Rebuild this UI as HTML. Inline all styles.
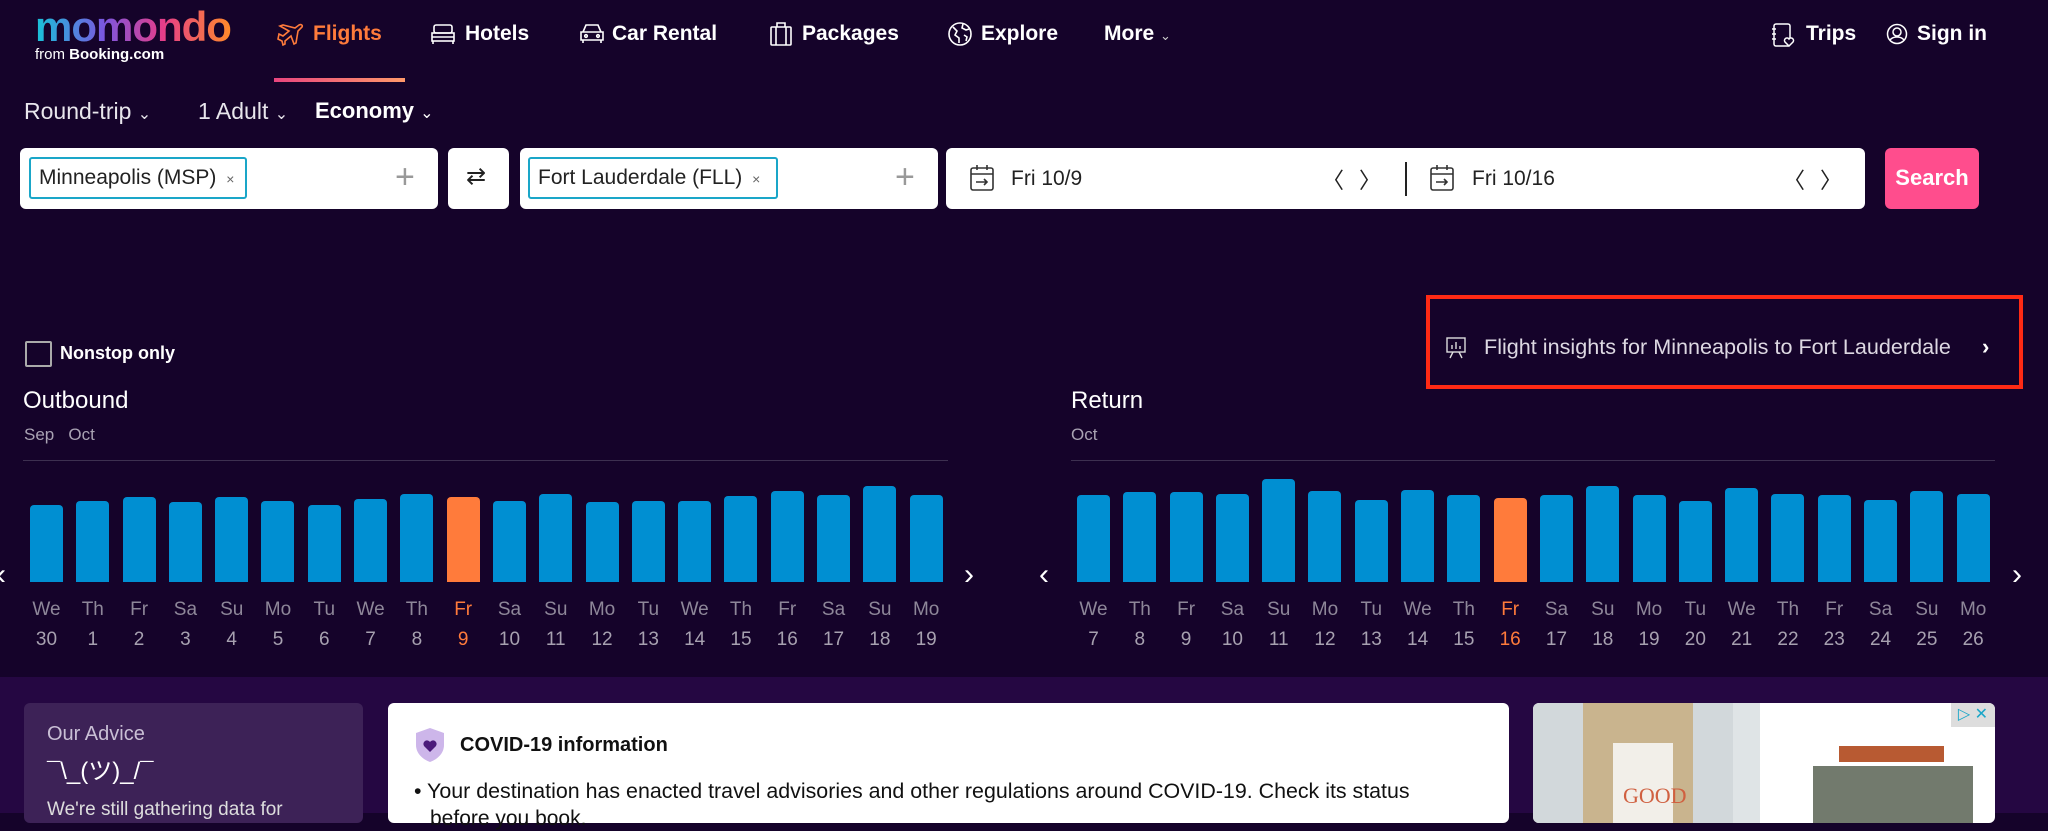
<!DOCTYPE html>
<html><head><meta charset="utf-8"><style>
*{margin:0;padding:0;box-sizing:border-box}
body{width:2048px;height:813px;overflow:hidden;background:#15032a;font-family:"Liberation Sans",sans-serif;color:#fff;position:relative}
.a{position:absolute;white-space:nowrap}
.nav{font-size:21px;font-weight:bold;top:22px}
.box{position:absolute;background:#fff;border-radius:6px;top:148px;height:61px}
.chip{position:absolute;top:9px;height:42px;border:2px solid #1aa6c8;border-radius:3px;color:#222;font-size:21px;line-height:38px;padding-left:8px}
.chart{position:absolute;top:470px;display:flex}
.col{width:46.3px;position:relative;height:180px}
.col i{position:absolute;left:0;width:33px;bottom:68px;background:#008fd2;border-radius:4px 4px 0 0}
.col b,.col u{position:absolute;left:0;width:33px;text-align:center;font-weight:normal;text-decoration:none;color:#8e8799;font-size:19px}
.col b{top:129px}.col u{top:159px;color:#a7a1b0}
.col.o i{background:#ff7b3b}.col.o b,.col.o u{color:#ff7b3b}
.g{color:#a9a3b3}
</style></head><body>
<!-- logo -->
<div class="a" style="left:35px;top:3px;font-size:42px;font-weight:bold;letter-spacing:-1px;background:linear-gradient(90deg,#17c3d8,#7a57e0 35%,#e43d8a 65%,#ff8a2a);-webkit-background-clip:text;color:transparent">momondo</div>
<div class="a" style="left:35px;top:46px;font-size:15px">from <b>Booking.com</b></div>
<!-- nav -->
<svg class="a" style="left:276px;top:22px" width="28" height="24" viewBox="0 0 28 24" fill="none" stroke="#ff7b3b" stroke-width="1.6"><path d="M3 12l4 2 6-5-9-5 3-1 12 3 4-3c2-1 4 0 3 2l-4 4-2 12-2 1-3-8-6 5v3l-2 1-1-4-4-2z"/></svg>
<div class="a nav" style="left:313px;color:#ff7b3b">Flights</div>
<div class="a" style="left:274px;top:78px;width:131px;height:4px;background:linear-gradient(90deg,#e8457e,#ff9a6a)"></div>
<svg class="a" style="left:430px;top:22px" width="26" height="24" fill="none" stroke="#fff" stroke-width="1.6"><rect x="4" y="3" width="18" height="8" rx="2"/><rect x="2" y="11" width="22" height="8"/><path d="M2 15h22M3 19v3M23 19v3"/></svg>
<div class="a nav" style="left:465px">Hotels</div>
<svg class="a" style="left:578px;top:22px" width="28" height="24" fill="none" stroke="#fff" stroke-width="1.6"><path d="M5 10l3-7h12l3 7M3 10h22v8H3zM5 18v3M23 18v3"/><circle cx="8" cy="14" r="1.3"/><circle cx="20" cy="14" r="1.3"/></svg>
<div class="a nav" style="left:612px">Car Rental</div>
<svg class="a" style="left:769px;top:21px" width="24" height="26" fill="none" stroke="#fff" stroke-width="1.6"><rect x="2" y="6" width="20" height="18" rx="1"/><path d="M8 6V2h8v4M7 6v18M17 6v18"/></svg>
<div class="a nav" style="left:802px">Packages</div>
<svg class="a" style="left:947px;top:21px" width="26" height="26" fill="none" stroke="#fff" stroke-width="1.6"><circle cx="13" cy="13" r="11"/><path d="M6 6l4 4-2 4 4 3v5M16 3l-1 4 4 2 3-1M17 14l3 2-1 4"/></svg>
<div class="a nav" style="left:981px">Explore</div>
<div class="a nav" style="left:1104px">More <span style="font-size:13px;color:#ccc;font-weight:normal">&#8964;</span></div>
<svg class="a" style="left:1771px;top:22px" width="26" height="26" fill="none" stroke="#fff" stroke-width="1.5"><rect x="3" y="2" width="16" height="22" rx="2"/><path d="M1 7h4M1 12h4M1 17h4M18 24l-4-4a2.5 2.5 0 014-3 2.5 2.5 0 014 3z" fill="#15032a"/></svg>
<div class="a nav" style="left:1806px">Trips</div>
<svg class="a" style="left:1886px;top:23px" width="22" height="22" fill="none" stroke="#fff" stroke-width="1.5"><circle cx="11" cy="11" r="9.5"/><circle cx="11" cy="9" r="4"/><path d="M4 17c3-4 11-4 14 0"/></svg>
<div class="a nav" style="left:1917px">Sign in</div>
<!-- trip options -->
<div class="a" style="left:24px;top:98px;font-size:23px;color:#e8e6ec">Round-trip <span style="font-size:16px">&#8964;</span></div>
<div class="a" style="left:198px;top:98px;font-size:23px;color:#e8e6ec">1 Adult <span style="font-size:16px">&#8964;</span></div>
<div class="a" style="left:315px;top:98px;font-size:22px;font-weight:bold">Economy <span style="font-size:16px;font-weight:normal">&#8964;</span></div>
<!-- search -->
<div class="box" style="left:20px;width:418px"><div class="chip" style="left:9px;width:218px">Minneapolis (MSP) <span style="font-size:14px;color:#666;margin-left:4px">×</span></div><div class="a" style="left:375px;top:10px;font-size:34px;color:#999;font-weight:lighter">+</div></div>
<div class="box" style="left:448px;width:61px"><div class="a" style="left:18px;top:14px;font-size:24px;color:#222">&#8644;</div></div>
<div class="box" style="left:520px;width:418px"><div class="chip" style="left:8px;width:250px">Fort Lauderdale (FLL) <span style="font-size:14px;color:#666;margin-left:4px">×</span></div><div class="a" style="left:375px;top:10px;font-size:34px;color:#999">+</div></div>
<div class="box" style="left:946px;width:919px;color:#222">
<svg class="a" style="left:23px;top:15px" width="28" height="30" fill="none" stroke="#333" stroke-width="1.6"><rect x="2" y="5" width="22" height="22" rx="2"/><path d="M2 11h22M8 2v5M18 2v5M7 19h11m-3-3l3 3-3 3"/></svg>
<div class="a" style="left:65px;top:19px;font-size:21px">Fri 10/9</div>
<div class="a" style="left:376px;top:15px;font-size:22px">&#12296;</div><div class="a" style="left:413px;top:15px;font-size:22px">&#12297;</div>
<div class="a" style="left:459px;top:14px;width:2px;height:34px;background:#222"></div>
<svg class="a" style="left:483px;top:15px" width="28" height="30" fill="none" stroke="#333" stroke-width="1.6"><rect x="2" y="5" width="22" height="22" rx="2"/><path d="M2 11h22M8 2v5M18 2v5M7 19h11m-3-3l3 3-3 3"/></svg>
<div class="a" style="left:526px;top:19px;font-size:21px">Fri 10/16</div>
<div class="a" style="left:837px;top:15px;font-size:22px">&#12296;</div><div class="a" style="left:874px;top:15px;font-size:22px">&#12297;</div>
</div>
<div class="box" style="left:1885px;width:94px;background:#ff4d8d"><div class="a" style="left:0;width:94px;text-align:center;top:17px;font-size:22px;font-weight:bold">Search</div></div>
<!-- nonstop -->
<div class="a" style="left:25px;top:341px;width:27px;height:26px;border:2px solid #aaa;border-radius:2px"></div>
<div class="a" style="left:60px;top:343px;font-size:18px;font-weight:bold">Nonstop only</div>
<!-- insights -->
<div class="a" style="left:1426px;top:295px;width:597px;height:94px;border:4px solid #ff2a14"></div>
<svg class="a" style="left:1445px;top:336px" width="22" height="24" fill="none" stroke="#ddd" stroke-width="1.4"><rect x="2" y="2" width="18" height="14"/><path d="M7 13V9M11 13V6M15 13V10M8 16l-3 6M14 16l3 6"/></svg>
<div class="a" style="left:1484px;top:334px;font-size:21.6px;color:#ddd8e2">Flight insights for Minneapolis to Fort Lauderdale</div>
<div class="a" style="left:1982px;top:334px;font-size:22px;font-weight:bold">›</div>
<!-- headings -->
<div class="a" style="left:23px;top:387px;font-size:24px">Outbound</div>
<div class="a g" style="left:24px;top:425px;font-size:17px">Sep&nbsp;&nbsp;&nbsp;Oct</div>
<div class="a" style="left:23px;top:460px;width:925px;height:1px;background:#3d3050"></div>
<div class="a" style="left:1071px;top:387px;font-size:24px">Return</div>
<div class="a g" style="left:1071px;top:425px;font-size:17px">Oct</div>
<div class="a" style="left:1071px;top:460px;width:924px;height:1px;background:#3d3050"></div>
<div class="a" style="left:-4px;top:558px;font-size:30px">‹</div>
<div class="a" style="left:964px;top:558px;font-size:30px">›</div>
<div class="a" style="left:1039px;top:558px;font-size:30px">‹</div>
<div class="a" style="left:2012px;top:558px;font-size:30px">›</div>
<div class="chart" style="left:30px">
<div class="col"><i style="height:77px"></i><b>We</b><u>30</u></div>
<div class="col"><i style="height:81px"></i><b>Th</b><u>1</u></div>
<div class="col"><i style="height:85px"></i><b>Fr</b><u>2</u></div>
<div class="col"><i style="height:80px"></i><b>Sa</b><u>3</u></div>
<div class="col"><i style="height:85px"></i><b>Su</b><u>4</u></div>
<div class="col"><i style="height:81px"></i><b>Mo</b><u>5</u></div>
<div class="col"><i style="height:77px"></i><b>Tu</b><u>6</u></div>
<div class="col"><i style="height:83px"></i><b>We</b><u>7</u></div>
<div class="col"><i style="height:88px"></i><b>Th</b><u>8</u></div>
<div class="col o"><i style="height:85px"></i><b>Fr</b><u>9</u></div>
<div class="col"><i style="height:81px"></i><b>Sa</b><u>10</u></div>
<div class="col"><i style="height:88px"></i><b>Su</b><u>11</u></div>
<div class="col"><i style="height:80px"></i><b>Mo</b><u>12</u></div>
<div class="col"><i style="height:81px"></i><b>Tu</b><u>13</u></div>
<div class="col"><i style="height:81px"></i><b>We</b><u>14</u></div>
<div class="col"><i style="height:86px"></i><b>Th</b><u>15</u></div>
<div class="col"><i style="height:91px"></i><b>Fr</b><u>16</u></div>
<div class="col"><i style="height:87px"></i><b>Sa</b><u>17</u></div>
<div class="col"><i style="height:96px"></i><b>Su</b><u>18</u></div>
<div class="col"><i style="height:87px"></i><b>Mo</b><u>19</u></div>
</div>
<div class="chart" style="left:1077px">
<div class="col"><i style="height:87px"></i><b>We</b><u>7</u></div>
<div class="col"><i style="height:90px"></i><b>Th</b><u>8</u></div>
<div class="col"><i style="height:90px"></i><b>Fr</b><u>9</u></div>
<div class="col"><i style="height:88px"></i><b>Sa</b><u>10</u></div>
<div class="col"><i style="height:103px"></i><b>Su</b><u>11</u></div>
<div class="col"><i style="height:91px"></i><b>Mo</b><u>12</u></div>
<div class="col"><i style="height:82px"></i><b>Tu</b><u>13</u></div>
<div class="col"><i style="height:92px"></i><b>We</b><u>14</u></div>
<div class="col"><i style="height:87px"></i><b>Th</b><u>15</u></div>
<div class="col o"><i style="height:84px"></i><b>Fr</b><u>16</u></div>
<div class="col"><i style="height:87px"></i><b>Sa</b><u>17</u></div>
<div class="col"><i style="height:96px"></i><b>Su</b><u>18</u></div>
<div class="col"><i style="height:87px"></i><b>Mo</b><u>19</u></div>
<div class="col"><i style="height:81px"></i><b>Tu</b><u>20</u></div>
<div class="col"><i style="height:94px"></i><b>We</b><u>21</u></div>
<div class="col"><i style="height:88px"></i><b>Th</b><u>22</u></div>
<div class="col"><i style="height:87px"></i><b>Fr</b><u>23</u></div>
<div class="col"><i style="height:82px"></i><b>Sa</b><u>24</u></div>
<div class="col"><i style="height:91px"></i><b>Su</b><u>25</u></div>
<div class="col"><i style="height:88px"></i><b>Mo</b><u>26</u></div>
</div>
<!-- bottom -->
<div class="a" style="left:0;top:677px;width:2048px;height:136px;background:#250742"></div>
<div class="a" style="left:24px;top:703px;width:339px;height:120px;background:#3d2257;border-radius:6px">
<div class="a" style="left:23px;top:20px;font-size:20px;color:#c9bfd5">Our Advice</div>
<div class="a" style="left:23px;top:48px;font-size:24px">¯\_(ツ)_/¯</div>
<div class="a" style="left:23px;top:96px;font-size:19px;color:#ddd">We're still gathering data for</div>
</div>
<div class="a" style="left:388px;top:703px;width:1121px;height:120px;background:#fff;border-radius:6px;color:#111">
<svg class="a" style="left:26px;top:24px" width="32" height="36"><path d="M16 1l14 5v12c0 8-6 14-14 17C8 32 2 26 2 18V6z" fill="#cdb6ea"/><path d="M16 25l-6-6a3.5 3.5 0 016-4 3.5 3.5 0 016 4z" fill="#4a1a7a"/></svg>
<div class="a" style="left:72px;top:31px;font-size:20px;font-weight:bold">COVID-19 information</div>
<div class="a" style="left:26px;top:76px;font-size:21.4px">• Your destination has enacted travel advisories and other regulations around COVID-19. Check its status</div>
<div class="a" style="left:42px;top:104px;font-size:21px">before you book.</div>
</div>
<div class="a" style="left:1533px;top:703px;width:462px;height:120px;background:#fff;border-radius:6px;overflow:hidden">
<div class="a" style="left:0;top:0;width:227px;height:120px;background:#d2d8db"></div>
<div class="a" style="left:50px;top:0;width:110px;height:120px;background:#c9b48e"></div>
<div class="a" style="left:80px;top:40px;width:60px;height:80px;background:#f2efe9"></div>
<div class="a" style="left:90px;top:80px;font-size:22px;color:#d06040;font-family:'Liberation Serif',serif">GOOD</div>
<div class="a" style="left:200px;top:0;width:27px;height:120px;background:#dfe4e6"></div>
<div class="a" style="left:306px;top:43px;width:105px;height:16px;background:#b85a32"></div>
<div class="a" style="left:280px;top:63px;width:160px;height:60px;background:#727a6d"></div>
<div class="a" style="left:418px;top:0;width:44px;height:24px;background:#ddd;color:#1aa6c8;font-size:16px;text-align:center;line-height:24px">▷ ✕</div>
</div>
</body></html>
